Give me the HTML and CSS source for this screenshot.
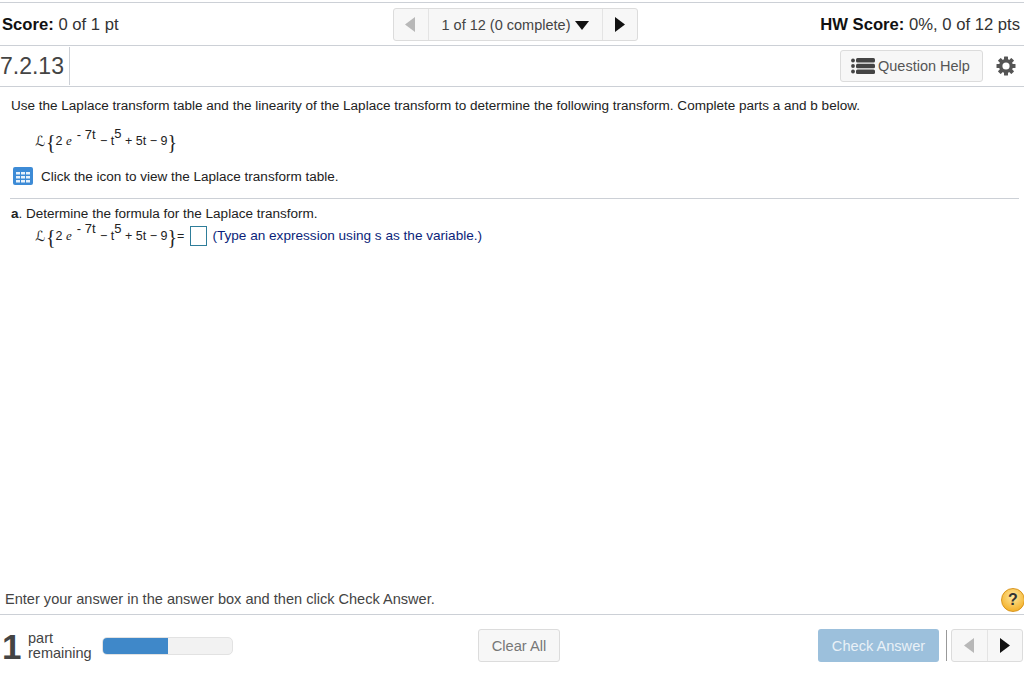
FILE: index.html
```html
<!DOCTYPE html>
<html lang="en">
<head>
<meta charset="utf-8">
<title>Question</title>
<link rel="stylesheet" href="styles.css">
</head>
<body>
<div class="page">
  <header class="score-bar">
    <div class="score"><b>Score:</b> 0 of 1 pt</div>
    <div class="pager">
      <button class="pager-arrow"><svg width="11" height="15" viewBox="0 0 11 15"><path d="M10 0V15L0 7.5Z" fill="#b8b8b8"/></svg></button>
      <div class="pager-label">1 of 12 (0 complete)<svg class="caret" width="14" height="9" viewBox="0 0 14 9"><path d="M0 0H14L7 9Z" fill="#111"/></svg></div>
      <button class="pager-arrow"><svg width="10" height="15" viewBox="0 0 10 15"><path d="M0 0V15L10 7.5Z" fill="#111"/></svg></button>
    </div>
    <div class="hw"><b>HW Score:</b> 0%, 0 of 12 pts</div>
  </header>
  <div class="title-bar">
    <div class="qnum">7.2.13</div>
    <button class="help-btn">
      <svg width="24" height="16" viewBox="0 0 24 16"><g fill="#444"><circle cx="2" cy="2.500" r="1.900"/><circle cx="2" cy="8" r="1.900"/><circle cx="2" cy="13.500" r="1.900"/><rect x="5" y="0" width="19" height="4.600" rx="1.500"/><rect x="5" y="5.700" width="19" height="4.600" rx="1.500"/><rect x="5" y="11.400" width="19" height="4.600" rx="1.500"/></g></svg>
      Question Help
    </button>
    <svg class="gear" width="20" height="20" viewBox="0 0 20 20">
      <g fill="#555">
        <rect x="8" y="0.500" width="4" height="19" rx=".5"/>
        <rect x="8" y="0.500" width="4" height="19" rx=".5" transform="rotate(45 10 10)"/>
        <rect x="8" y="0.500" width="4" height="19" rx=".5" transform="rotate(90 10 10)"/>
        <rect x="8" y="0.500" width="4" height="19" rx=".5" transform="rotate(135 10 10)"/>
      </g>
      <circle cx="10" cy="10" r="5.300" fill="none" stroke="#555" stroke-width="3.400"/>
      <circle cx="10" cy="10" r="3.600" fill="#fff"/>
    </svg>
  </div>
  <main class="content">
    <p class="prompt">Use the Laplace transform table and the linearity of the Laplace transform to determine the following transform. Complete parts a and b below.</p>
    <div class="math math-main"><span class="script">ℒ</span><span class="brace">{</span>2 <i class="e">e</i><sup class="exp">- 7t</sup> − t<sup class="pow">5</sup> + 5t − 9<span class="brace">}</span></div>
    <div class="table-link">
      <svg width="20" height="18" viewBox="0 0 20 18"><rect width="20" height="18" rx="2" fill="#3d8bd6"/><g fill="#e8f2fb"><rect x="3" y="5" width="4" height="2.500"/><rect x="8" y="5" width="4" height="2.500"/><rect x="13" y="5" width="4" height="2.500"/><rect x="3" y="9" width="4" height="2.500"/><rect x="8" y="9" width="4" height="2.500"/><rect x="13" y="9" width="4" height="2.500"/><rect x="3" y="13" width="4" height="2.500"/><rect x="8" y="13" width="4" height="2.500"/><rect x="13" y="13" width="4" height="2.500"/></g></svg>
      <span>Click the icon to view the Laplace transform table.</span>
    </div>
    <hr class="rule">
    <p class="part"><b>a</b>. Determine the formula for the Laplace transform.</p>
    <div class="answer-row">
      <div class="math"><span class="script">ℒ</span><span class="brace">{</span>2 <i class="e">e</i><sup class="exp">- 7t</sup> − t<sup class="pow">5</sup> + 5t − 9<span class="brace">}</span>=</div>
      <span class="answer-box"></span>
      <span class="hint">(Type an expression using s as the variable.)</span>
    </div>
  </main>
  <div class="instruction">
    <span>Enter your answer in the answer box and then click Check Answer.</span>
    <span class="help-dot">?</span>
  </div>
  <footer class="footer">
    <div class="parts">
      <span class="parts-num">1</span>
      <span class="parts-text">part<br>remaining</span>
      <div class="progress"><div class="progress-fill"></div></div>
    </div>
    <button class="clear">Clear All</button>
    <div class="actions">
      <button class="check">Check Answer</button>
      <div class="nav">
        <button class="nav-arrow"><svg width="11" height="15" viewBox="0 0 11 15"><path d="M10 0V15L0 7.500Z" fill="#b8b8b8"/></svg></button>
        <button class="nav-arrow"><svg width="10" height="15" viewBox="0 0 10 15"><path d="M0 0V15L10 7.500Z" fill="#111"/></svg></button>
      </div>
    </div>
  </footer>
</div>
</body>
</html>
```
FILE: styles.css
```css
* { box-sizing: border-box; }
html, body { margin: 0; padding: 0; }
body { background: #fff; font-family: "Liberation Sans", Arial, sans-serif; color: #222; }
button { font-family: inherit; cursor: pointer; padding: 0; }
.page { width: 1024px; height: 675px; display: flex; flex-direction: column; padding-top: 2px; overflow: hidden; }

.score-bar { height: 44px; flex: none; border-top: 1px solid #ccd0d6; border-bottom: 1px solid #ccd0d6; display: grid; grid-template-columns: 1fr auto 1fr; align-items: center; padding: 1px 4px 0 2px; font-size: 16.650px; color: #333; }
.score b, .hw b { color: #111; }
.hw { text-align: right; }
.pager { display: flex; height: 33px; width: 245px; margin: -1px 0 0 8px; border: 1px solid #dcdcdc; border-radius: 3px; background: #f7f7f7; }
.pager-arrow { width: 35px; flex: none; border: 0; background: none; display: flex; align-items: center; justify-content: center; }
.pager-arrow:first-child { border-right: 1px solid #e4e4e4; }
.pager-arrow:last-child { border-left: 1px solid #e4e4e4; }
.pager-label { flex: 1; display: flex; align-items: center; padding: 1px 0 0 13px; gap: 5px; font-size: 14.500px; color: #444; white-space: nowrap; }
.caret { margin-top: 1px; }

.title-bar { height: 41px; flex: none; border-bottom: 1px solid #ccd0d6; display: flex; align-items: center; }
.qnum { height: 38px; width: 70px; border-right: 1px solid #ccd0d6; font-size: 23px; line-height: 38px; color: #444; }
.help-btn { margin-left: auto; width: 143px; height: 32px; border: 1px solid #dcdcdc; border-radius: 3px; background: #f7f7f7; color: #555; font-size: 14.500px; display: flex; align-items: center; gap: 3px; padding-left: 10px; }
.gear { margin: 0 8px 0 13px; flex: none; }

.content { flex: 1; padding: 0 5px 0 11px; font-size: 13.520px; color: #222; }
.prompt { margin: 11px 0 0; line-height: 16px; }
.math { font-size: 12.500px; display: flex; align-items: center; white-space: pre; color: #222; }
.math-main { margin: 15px 0 0 24px; height: 24px; }
.script { font-family: "DejaVu Sans", sans-serif; font-style: italic; font-size: 14px; line-height: 18px; width: 11px; }
.brace { font-family: "Liberation Serif", serif; font-size: 20px; line-height: 20px; transform: scaleY(1.1); }
.e { font-family: "Liberation Serif", serif; font-size: 13px; margin-left: 0; }
.exp { font-size: 13px; line-height: 1; margin: -14px 1px 0 5px; }
.pow { font-size: 13px; line-height: 1; margin: -15px 0 0 0; }
.table-link { display: flex; align-items: center; gap: 8px; margin: 14px 0 0 2px; height: 18px; }
.rule { border: 0; border-top: 1px solid #ccd0d6; margin: 13px 0 0 -1px; height: 0; }
.part { margin: 7px 0 0; line-height: 15px; }
.answer-row { display: flex; align-items: center; margin: 4px 0 0 24px; height: 21px; }
.answer-box { width: 17px; height: 20px; border: 1px solid #2e7d9a; margin: 0 5px 0 6px; flex: none; background: #fff; }
.hint { color: #0b1f7a; font-size: 13.600px; }

.instruction { height: 31px; flex: none; border-bottom: 1px solid #ccd0d6; display: flex; align-items: center; justify-content: space-between; padding-left: 5px; font-size: 14.570px; color: #444; }
.help-dot { width: 24px; height: 24px; border-radius: 50%; background: radial-gradient(circle at 50% 35%, #ffe9a0, #f4b431 75%); border: 1px solid #d9951d; color: #333; font-weight: bold; font-size: 16px; display: flex; align-items: center; justify-content: center; margin-right: -1px; margin-top: 2px; }

.footer { height: 60px; flex: none; display: grid; grid-template-columns: 1fr auto 1fr; align-items: center; padding-top: 1px; }
.parts { display: flex; align-items: center; padding-left: 2px; }
.parts-num { font-size: 35px; font-weight: bold; color: #444; width: 26px; line-height: 1; padding-top: 1px; }
.parts-text { font-size: 14.500px; line-height: 15px; color: #444; width: 74px; margin-top: 1px; }
.progress { width: 131px; height: 18px; margin-top: 1px; border: 1px solid #e2e2e2; border-radius: 5px; background: #f2f2f2; overflow: hidden; }
.progress-fill { width: 50%; height: 100%; background: #3f88c9; }
.clear { justify-self: center; width: 82px; height: 33px; margin-left: 14px; border: 1px solid #dcdcdc; border-radius: 3px; background: #f7f7f7; color: #777; font-size: 14.700px; }
.actions { display: flex; justify-content: flex-end; align-items: center; padding-right: 1px; }
.check { width: 121px; height: 33px; border: 0; border-radius: 3px; background: #9cc0dc; color: #e9f1f7; font-size: 14.600px; }
.nav { display: flex; height: 33px; width: 72px; margin-left: 12px; border: 1px solid #dcdcdc; border-radius: 3px; background: #f7f7f7; position: relative; }
.nav::before { content: ""; position: absolute; top: 0; bottom: 0; left: -6px; width: 1px; background: #999; }
.nav-arrow { width: 35px; border: 0; background: none; display: flex; align-items: center; justify-content: center; }
.nav-arrow:last-child { border-left: 1px solid #e4e4e4; }
```
